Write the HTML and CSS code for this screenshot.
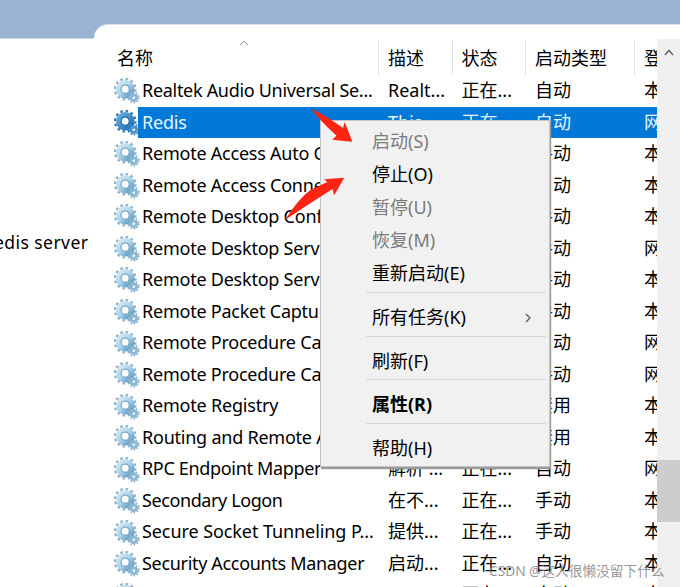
FILE: index.html
```html
<!DOCTYPE html>
<html lang="zh-CN">
<head>
<meta charset="utf-8">
<title>服务</title>
<link rel="stylesheet" href="styles.css">
</head>
<body>
<svg width="0" height="0" class="defs">
  <defs>
    <linearGradient id="steel" x1="0" y1="0" x2="1" y2="1">
      <stop offset="0" stop-color="#d3e6f0"/><stop offset=".5" stop-color="#a9d3ec"/><stop offset="1" stop-color="#5f96bf"/>
    </linearGradient>
    <linearGradient id="blue" x1="0" y1="0" x2="1" y2="1">
      <stop offset="0" stop-color="#62ace2"/><stop offset="1" stop-color="#2370b4"/>
    </linearGradient>
    <symbol id="gears" viewBox="0 0 26 26">
      <circle cx="11.2" cy="11.2" r="10.2" fill="none" stroke="var(--teeth)" stroke-width="2.4" stroke-dasharray="2.67 2.67"/>
      <circle cx="11.2" cy="11.2" r="6.4" fill="none" stroke="var(--metal)" stroke-width="5.8"/>
      <circle cx="11.2" cy="11.2" r="4.2" fill="none" stroke="var(--rim)" stroke-width="1.1"/>
      <circle cx="19.8" cy="19.6" r="5" fill="none" stroke="var(--teeth)" stroke-width="1.8" stroke-dasharray="1.57 1.57"/>
      <circle cx="19.8" cy="19.6" r="2.8" fill="none" stroke="var(--small)" stroke-width="3"/>
    </symbol>
  </defs>
</svg>
<div class="window">
  <aside class="side"><div class="side-top"></div><p>edis server</p></aside>
  <main class="list">
    <div class="head">
      <span class="name">名称</span><span class="c">描述</span><span class="c">状态</span><span class="c type">启动类型</span><span class="c last">登</span>
      <svg class="sort" viewBox="0 0 10 6"><path d="M1 5 5 1.3 9 5"/></svg>
    </div>
    <div class="rows" id="rows"></div>
  </main>
  <div class="scroll">
    <svg viewBox="0 0 10 7"><path d="M1 6 5 1.5 9 6"/></svg>
    <div class="thumb"></div>
  </div>
</div>
<div class="menu">
  <div class="item off">启动(S)</div>
  <div class="item">停止(O)</div>
  <div class="item off">暂停(U)</div>
  <div class="item off">恢复(M)</div>
  <div class="item">重新启动(E)</div>
  <hr>
  <div class="item">所有任务(K)<svg viewBox="0 0 6 10"><path d="M1 1 5 5 1 9"/></svg></div>
  <hr>
  <div class="item">刷新(F)</div>
  <hr>
  <div class="item bold">属性(R)</div>
  <hr>
  <div class="item">帮助(H)</div>
</div>
<svg class="arrows" viewBox="0 0 680 587">
  <path d="M311.300 109 Q322 113 343 128 L344.700 122 352.300 141.700 332.300 139.700 336.500 135.500 Q323 124 311.300 109Z"/>
  <path d="M285 220 Q298 199 311 189.500 L327.500 182 324 179.300 344.300 177.700 334 195.500 332.700 189 Q315 200 285 220Z"/>
</svg>
<div class="watermark">CSDN @这人很懒没留下什么</div>
<script src="rows.js"></script>
</body>
</html>
```
FILE: styles.css
```css
* { box-sizing: border-box; }
body {
  margin: 0; width: 680px; height: 587px; overflow: hidden; position: relative;
  background: #99b3d1; color: #000;
  font: 18px/31.53px "Noto Sans", "Noto Sans CJK SC", sans-serif;
}
.defs { position: absolute; }
.window { display: flex; height: 587px; }
.side { width: 94px; background: #fff; }
.side-top { height: 39px; background: #99b3d1; border-bottom: 1px solid #c9d8e9; }
.side p { margin: 188px 0 0 -6px; font-size: 17.6px; letter-spacing: .4px; white-space: nowrap; }
.list {
  width: 563px; margin-top: 24px; padding: 15px 0 0 20px; overflow: hidden;
  background: #fff; border-top: 1px solid #d6e1ed; border-top-left-radius: 14px;
}
.head { display: flex; height: 35.200px; position: relative; line-height: 37px; }
.head span { flex: none; white-space: nowrap; }
.head .name { width: 264px; padding-left: 3px; }
.head .c { width: 73.500px; border-left: 1px solid #e2e2e2; padding-left: 9px; }
.head .type { width: 109px; }
.head .last { width: 30px; }
.sort { position: absolute; left: 125px; top: 0; width: 10px; height: 6px; fill: none; stroke: #888; }
.row { display: grid; grid-template-columns: 24px 250px 73.500px 73.500px 109px 30px; height: 31.53px; white-space: nowrap; --teeth: #8fb3ca; --metal: url(#steel); --rim: #7ba5c0; --small: #8cb8d5; }
.row svg { width: 26px; height: 26px; margin-top: 3.200px; }
.row .label { padding-left: 4px; }
.row.selected { color: #e8f4ff; background: linear-gradient(90deg, transparent 24px, #0078d7 24px); --teeth: #387eb7; --metal: url(#blue); --rim: #2b6ca5; --small: #4a95ce; }
.scroll { width: 23px; margin-top: 24px; border-top: 1px solid #d6e1ed; background: linear-gradient(#fff 14px, #f0f0f0 14px); }
.scroll svg { display: block; width: 10px; height: 7px; margin: 24px 0 0 7px; fill: none; stroke: #666; stroke-width: 1.6; }
.thumb { margin-top: 404px; height: 62px; background: #cdcdcd; }
.menu {
  position: absolute; left: 320px; top: 120px; width: 230px; height: 347px; padding: 4px 3px 0 51px;
  background: #f1f1f1; border: 1px solid #c4c4c4; box-shadow: 1px 2px 1px #999;
}
.item { display: flex; align-items: center; justify-content: space-between; height: 33px; line-height: 33px; letter-spacing: 0; }
.item svg { width: 6px; height: 10px; margin-right: 15px; fill: none; stroke: #555; stroke-width: 1.2; }
.off { color: #7b7b7b; }
.bold { font-weight: 700; }
.menu hr { height: 1px; margin: 1.500px 0 8px -6px; border: 0; background: #d7d7d7; }
.menu .off + .item + hr, .menu hr:first-of-type { margin-top: 2px; }
.arrows { position: absolute; left: 0; top: 0; width: 680px; height: 587px; fill: #ff2314; }
.watermark { position: absolute; left: 489px; top: 557px; font-size: 13.700px; line-height: 28px; white-space: nowrap; color: #888; opacity: .85; }
```
FILE: rows.js
```js
// name, letter spacing, description, status, startup type, account
const services = [
  ["Realtek Audio Universal Se...", -.3, "Realt...", "正在...", "自动", "本"],
  ["Redis", -.23, "This...", "正在...", "自动", "网"],
  ["Remote Access Auto Con...", -.23, "", "", "手动", "本"],
  ["Remote Access Connecti...", -.23, "", "", "自动", "本"],
  ["Remote Desktop Configu...", -.23, "", "", "手动", "本"],
  ["Remote Desktop Services", -.23, "", "", "手动", "网"],
  ["Remote Desktop Service...", -.23, "", "", "手动", "本"],
  ["Remote Packet Capture ...", -.23, "", "", "手动", "本"],
  ["Remote Procedure Call (...", -.23, "", "", "自动", "网"],
  ["Remote Procedure Call (...", -.23, "", "", "手动", "网"],
  ["Remote Registry", -.2, "", "", "禁用", "本"],
  ["Routing and Remote Acc...", -.23, "", "", "禁用", "本"],
  ["RPC Endpoint Mapper", -.33, "解析 ...", "正在...", "自动", "网"],
  ["Secondary Logon", -.4, "在不...", "正在...", "手动", "本"],
  ["Secure Socket Tunneling P...", -.08, "提供...", "正在...", "手动", "本"],
  ["Security Accounts Manager", -.32, "启动...", "正在...", "自动", "本"],
  ["Security Center", -.23, "WSC...", "正在...", "自动", "本"]
];
document.getElementById("rows").innerHTML = services.map(([name, spacing, ...cells], i) =>
  `<div class="row${i === 1 ? " selected" : ""}"><svg><use href="#gears"/></svg>` +
  `<span class="label" style="letter-spacing:${spacing}px">${name}</span>` +
  cells.map(text => `<span>${text}</span>`).join("") + "</div>"
).join("");
```
